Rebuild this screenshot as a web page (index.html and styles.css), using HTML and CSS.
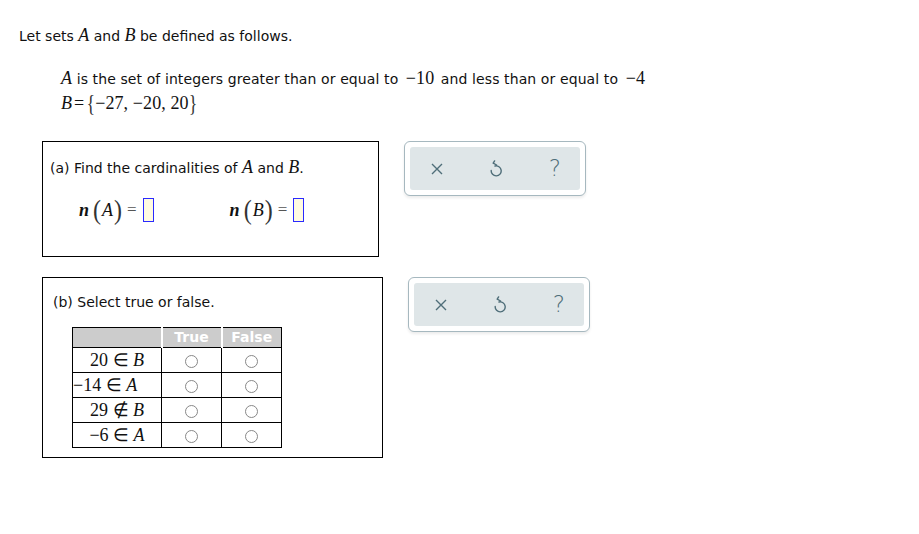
FILE: index.html
```html
<!DOCTYPE html>
<html>
<head>
<meta charset="utf-8">
<link rel="stylesheet" href="styles.css">
</head>
<body>
<p class="intro">Let sets <span class="mi">A</span> and <span class="mi">B</span> be defined as follows.</p>
<div class="defs">
  <div class="defline"><span class="mi">A</span> is the set of integers greater than or equal to <span class="mn sp">−10</span> and less than or equal to <span class="mn sp">−4</span></div>
  <div class="defline m"><span class="mi">B</span><span class="eq">=</span><span class="brace">{</span>−27, −20, 20<span class="brace">}</span></div>
</div>

<div class="row row-a">
  <div class="box box-a">
    <p class="q">(a) Find the cardinalities of <span class="mi">A</span> and <span class="mi">B</span>.</p>
    <div class="answers">
      <div class="ans"><span class="mi n">n</span><span class="paren">(</span><span class="mi">A</span><span class="paren">)</span><span class="eqs">=</span><span class="inp"></span></div>
      <div class="ans"><span class="mi n">n</span><span class="paren">(</span><span class="mi">B</span><span class="paren">)</span><span class="eqs">=</span><span class="inp"></span></div>
    </div>
  </div>
  <div class="tools">
    <div class="panel">
      <svg class="ic" width="14" height="14" viewBox="0 0 14 14"><path d="M2 2 L12 12 M12 2 L2 12" stroke="#4f6e79" stroke-width="1.4" fill="none"/></svg>
      <svg class="ic" width="16" height="18" viewBox="0 0 16 18"><path d="M5.2 3.2 L8.6 5.0 M5.2 3.2 L6.6 0.9 M7.0 6.0 A5 5 0 1 1 3.2 10.5" stroke="#4f6e79" stroke-width="1.4" fill="none" stroke-linecap="round"/></svg>
      <span class="qm">?</span>
    </div>
  </div>
</div>

<div class="row row-b">
  <div class="box box-b">
    <p class="q">(b) Select true or false.</p>
    <table class="tf">
      <tr class="hd"><th class="c1"></th><th>True</th><th>False</th></tr>
      <tr><td class="c1"><span class="mn">20</span> ∈ <span class="mi">B</span></td><td><span class="rad"></span></td><td><span class="rad"></span></td></tr>
      <tr><td class="c1 left"><span class="mn">−14</span> ∈ <span class="mi">A</span></td><td><span class="rad"></span></td><td><span class="rad"></span></td></tr>
      <tr><td class="c1"><span class="mn">29</span> ∉ <span class="mi">B</span></td><td><span class="rad"></span></td><td><span class="rad"></span></td></tr>
      <tr><td class="c1"><span class="mn">−6</span> ∈ <span class="mi">A</span></td><td><span class="rad"></span></td><td><span class="rad"></span></td></tr>
    </table>
  </div>
  <div class="tools">
    <div class="panel">
      <svg class="ic" width="14" height="14" viewBox="0 0 14 14"><path d="M2 2 L12 12 M12 2 L2 12" stroke="#4f6e79" stroke-width="1.4" fill="none"/></svg>
      <svg class="ic" width="16" height="18" viewBox="0 0 16 18"><path d="M5.2 3.2 L8.6 5.0 M5.2 3.2 L6.6 0.9 M7.0 6.0 A5 5 0 1 1 3.2 10.5" stroke="#4f6e79" stroke-width="1.4" fill="none" stroke-linecap="round"/></svg>
      <span class="qm">?</span>
    </div>
  </div>
</div>
</body>
</html>
```

FILE: styles.css
```css
html, body {
  margin: 0;
  padding: 0;
  background: #fff;
}
body {
  font-family: "DejaVu Sans", Verdana, sans-serif;
  font-size: 14px;
  color: #111;
  padding: 26px 0 0 19px;
}
p { margin: 0; }
.mi {
  font-family: "Liberation Serif", "Times New Roman", serif;
  font-style: italic;
  font-size: 18px;
}
.mn {
  font-family: "Liberation Serif", "Times New Roman", serif;
  font-size: 18px;
}
.mn.sp { margin: 0 2px 0 3px; }
.intro {
  height: 18px;
  line-height: 18px;
}
.defs {
  margin: 23px 0 0 42px;
}
.defline {
  height: 25px;
  line-height: 22px;
  white-space: nowrap;
  letter-spacing: 0.1px;
}
.defline.m {
  font-family: "Liberation Serif", "Times New Roman", serif;
  font-size: 18px;
}
.eq { margin: 0 2px; }
.brace {
  display: inline-block;
  transform: scaleY(1.25);
  color: #333;
}
.row {
  display: flex;
  align-items: flex-start;
  gap: 25px;
  margin-left: 23px;
}
.row-a { margin-top: 24px; }
.row-b { margin-top: 20px; }
.box {
  border: 1px solid #000;
  box-sizing: border-box;
}
.box-a {
  width: 337px;
  height: 116px;
  padding: 16px 0 0 7px;
}
.box-b {
  width: 341px;
  height: 181px;
  padding: 15px 0 0 10px;
}
.q { line-height: 18px; height: 18px; }
.answers {
  display: flex;
  margin: 21px 0 0 29px;
  gap: 76px;
}
.ans {
  display: flex;
  align-items: center;
  height: 26px;
}
.n { font-weight: bold; margin-right: 3px; }
.paren {
  font-family: "Liberation Serif", serif;
  font-size: 24px;
  color: #333;
  display: inline-block;
  transform: scaleY(1.1);
  margin: 0 1px;
}
.eqs {
  font-family: "Liberation Serif", serif;
  font-size: 17px;
  color: #555;
  margin: 0 6px 0 4px;
}
.inp {
  display: inline-block;
  width: 9px;
  height: 22px;
  border: 1.5px solid #2a2aff;
  background: #fffbe0;
}
.tools {
  width: 182px;
  height: 55px;
  box-sizing: border-box;
  border: 1px solid #a6b8bf;
  border-radius: 6px;
  background: #fff;
  padding: 5px;
  box-shadow: 0 2px 3px rgba(0,0,0,0.08);
}
.panel {
  height: 43px;
  background: #dfe6e8;
  border-radius: 3px;
  display: flex;
  align-items: center;
  justify-content: space-between;
  padding: 0 19px 0 20px;
}
.qm {
  font-family: "DejaVu Sans", sans-serif;
  font-size: 23px;
  font-weight: 300;
  color: #4f6e79;
  line-height: 1;
}
.tf {
  border-collapse: collapse;
  margin: 16px 0 0 19px;
  border: 1px solid #000;
}
.tf th {
  background: #cccccc;
  color: #fff;
  font-family: "DejaVu Sans", sans-serif;
  font-weight: bold;
  font-size: 14px;
  height: 19px;
  padding: 0;
  border-left: 2px solid #fff;
  border-top: 1px solid #000;
  line-height: 19px;
}
.tf th.c1 { border-left: none; border-right: 1px solid #000; }
.tf td {
  border: 1px solid #000;
  height: 24px;
  padding: 0;
  text-align: center;
  width: 59px;
}
.tf td.c1 {
  width: 88px;
  font-family: "Liberation Serif", serif;
  font-size: 18px;
}
.tf td.c1.left { text-align: left; }
.rad {
  display: inline-block;
  width: 11px;
  height: 11px;
  border: 1px solid #888;
  border-radius: 50%;
  vertical-align: middle;
}
```
